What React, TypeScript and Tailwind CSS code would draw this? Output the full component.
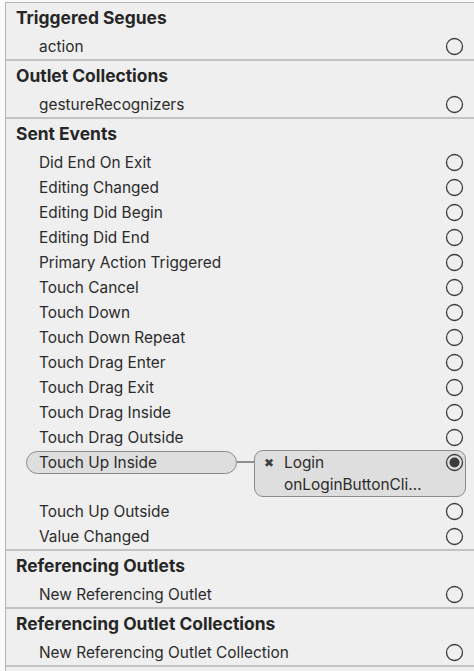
import React from "react";

const font = { fontFamily: "Inter, 'Noto Sans', sans-serif" };

function Circle({ filled = false }: { filled?: boolean }) {
  return (
    <svg width="19" height="19" viewBox="0 0 19 19" className="shrink-0">
      <circle cx="9.5" cy="9.5" r="8" fill="none" stroke="#3c3c3c" strokeWidth="1.3" />
      {filled && <circle cx="9.5" cy="9.5" r="5" fill="#3c3c3c" />}
    </svg>
  );
}

function Header({ title }: { title: string }) {
  return (
    <div className="h-[31px] flex items-center pl-[10px] text-[17.4px] font-bold text-[#262626]">
      {title}
    </div>
  );
}

function Row({ label }: { label: string }) {
  return (
    <div className="h-[25px] flex items-center justify-between pl-[33px] pr-[10px] text-[15.4px] text-[#2b2b2b]">
      <span>{label}</span>
      <Circle />
    </div>
  );
}

function Section({ title, children }: { title: string; children: React.ReactNode }) {
  return (
    <div className="border-b-2 border-[#c3c3c3]">
      <Header title={title} />
      {children}
    </div>
  );
}

const sentEvents = [
  "Did End On Exit",
  "Editing Changed",
  "Editing Did Begin",
  "Editing Did End",
  "Primary Action Triggered",
  "Touch Cancel",
  "Touch Down",
  "Touch Down Repeat",
  "Touch Drag Enter",
  "Touch Drag Exit",
  "Touch Drag Inside",
  "Touch Drag Outside",
];

function ConnectedRow() {
  return (
    <div className="h-[49px] flex items-start pl-[20px] pr-[8px] text-[15.4px] text-[#2b2b2b]">
      <div className="mt-[1px] h-[23px] w-[211px] shrink-0 rounded-full border-[1.5px] border-[#8c8c8c] bg-[#dedede] flex items-center pl-[12px]">
        Touch Up Inside
      </div>
      <div className="mt-[11px] h-[2px] w-[17px] shrink-0 bg-[#8c8c8c]" />
      <div className="flex-1 h-[47px] rounded-[9px] border-[1.5px] border-[#8c8c8c] bg-[#dedede] flex flex-col pl-[9px] pr-[1px]">
        <div className="h-[23px] flex items-center justify-between">
          <div className="flex items-center">
            <span className="w-[20px] text-[12px] text-[#3c3c3c]">✖</span>
            <span>Login</span>
          </div>
          <Circle filled />
        </div>
        <div className="h-[22px] flex items-center pl-[20px]">onLoginButtonCli…</div>
      </div>
    </div>
  );
}

export default function App() {
  return (
    <div className="w-[474px] h-[671px] bg-[#fafafa] overflow-hidden pt-[2px] pl-[5px]" style={font}>
      <div className="h-full bg-[#efefef] border-l-[1.5px] border-t-[1.5px] border-[#b5b5b5]">
        <Section title="Triggered Segues">
          <Row label="action" />
        </Section>
        <Section title="Outlet Collections">
          <Row label="gestureRecognizers" />
        </Section>
        <Section title="Sent Events">
          {sentEvents.map((e) => (
            <Row key={e} label={e} />
          ))}
          <ConnectedRow />
          <Row label="Touch Up Outside" />
          <Row label="Value Changed" />
        </Section>
        <Section title="Referencing Outlets">
          <Row label="New Referencing Outlet" />
        </Section>
        <Section title="Referencing Outlet Collections">
          <Row label="New Referencing Outlet Collection" />
        </Section>
      </div>
    </div>
  );
}
